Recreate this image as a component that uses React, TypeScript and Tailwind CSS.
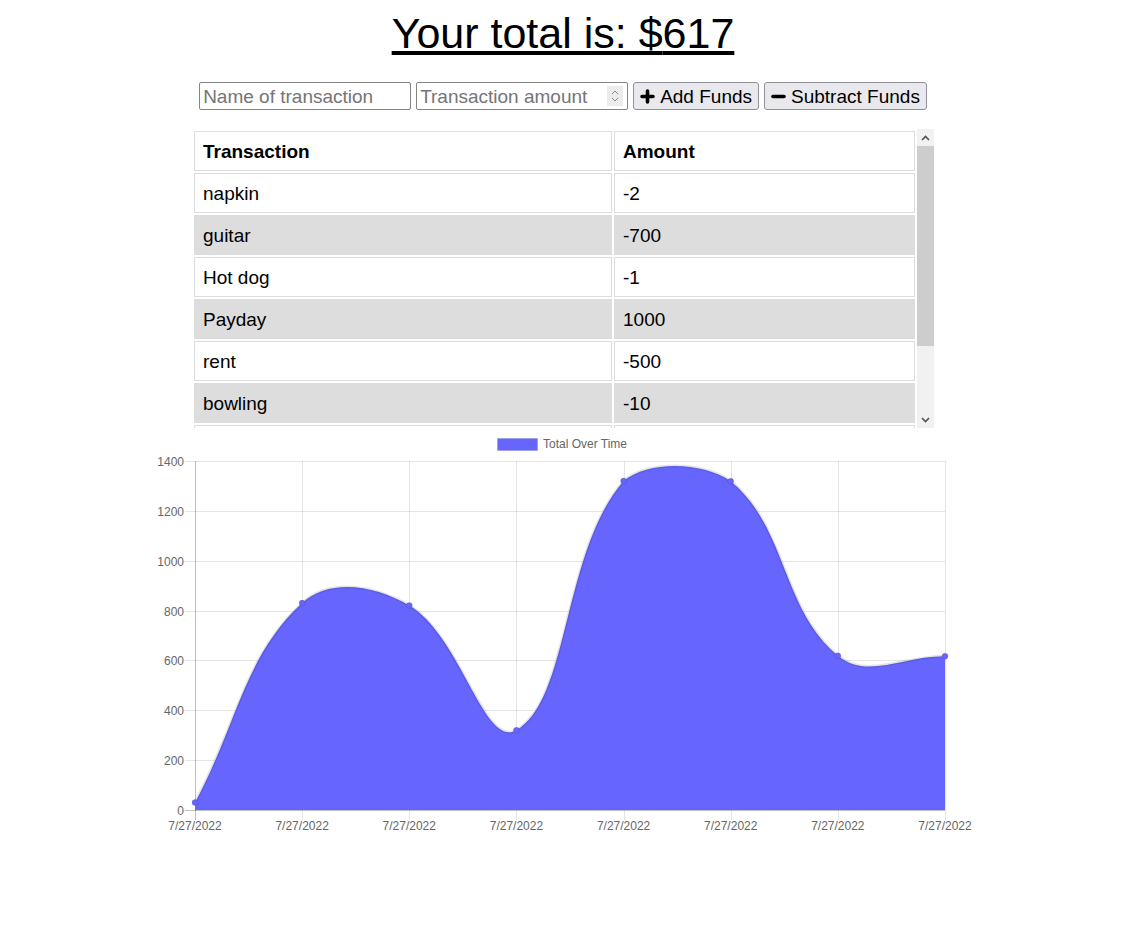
import React from 'react';

const rows = [
  { name: 'napkin', amount: -2 },
  { name: 'guitar', amount: -700 },
  { name: 'Hot dog', amount: -1 },
  { name: 'Payday', amount: 1000 },
  { name: 'rent', amount: -500 },
  { name: 'bowling', amount: -10 },
  { name: 'paycheck', amount: 800 },
  { name: 'gift', amount: 30 },
];

function PlusIcon() {
  return (
    <svg width="15" height="15" viewBox="0 0 15 15">
      <path d="M7.5 2v11M2 7.5h11" stroke="#000" strokeWidth="3.6" strokeLinecap="round" />
    </svg>
  );
}

function MinusIcon() {
  return (
    <svg width="15" height="15" viewBox="0 0 15 15">
      <path d="M2 7.5h11" stroke="#000" strokeWidth="3.6" strokeLinecap="round" />
    </svg>
  );
}

function Chevron({ up }: { up?: boolean }) {
  return (
    <svg width="9" height="6" viewBox="0 0 9 6">
      <path d={up ? 'M1 5l3.5-3.5L8 5' : 'M1 1l3.5 3.5L8 1'} stroke="#505050" strokeWidth="1.6" fill="none" />
    </svg>
  );
}

function Chart() {
  const W = 826;
  const H = 413;
  const left = 45;
  const right = 795;
  const top = 33;
  const bottom = 382;
  const max = 1400;

  // oldest first
  const totals: number[] = [];
  let running = 0;
  [...rows].reverse().forEach((r) => {
    running += r.amount;
    totals.push(running);
  });

  const pts = totals.map((v, i) => ({
    x: left + (i * (right - left)) / (totals.length - 1),
    y: bottom - (v / max) * (bottom - top),
  }));

  // chart.js style spline, tension 0.4
  const t = 0.4;
  const clampX = (x: number) => Math.min(right, Math.max(left, x));
  const clampY = (y: number) => Math.min(bottom, Math.max(top, y));
  const ctrl = pts.map((p, i) => {
    const prev = pts[i - 1] ?? p;
    const next = pts[i + 1] ?? p;
    const d01 = Math.hypot(p.x - prev.x, p.y - prev.y);
    const d12 = Math.hypot(next.x - p.x, next.y - p.y);
    const s01 = d01 / (d01 + d12) || 0;
    const s12 = d12 / (d01 + d12) || 0;
    const fa = t * s01;
    const fb = t * s12;
    return {
      px: clampX(p.x - fa * (next.x - prev.x)),
      py: clampY(p.y - fa * (next.y - prev.y)),
      nx: clampX(p.x + fb * (next.x - prev.x)),
      ny: clampY(p.y + fb * (next.y - prev.y)),
    };
  });

  let line = `M${pts[0].x},${pts[0].y}`;
  for (let i = 1; i < pts.length; i++) {
    line += ` C${ctrl[i - 1].nx},${ctrl[i - 1].ny} ${ctrl[i].px},${ctrl[i].py} ${pts[i].x},${pts[i].y}`;
  }
  const area = `${line} L${right},${bottom} L${left},${bottom} Z`;

  const ticks = [0, 200, 400, 600, 800, 1000, 1200, 1400];
  const grid = 'rgba(0,0,0,0.1)';
  const zero = 'rgba(0,0,0,0.25)';

  return (
    <svg width={W} height={H} viewBox={`0 0 ${W} ${H}`} className="block">
      {/* legend */}
      <rect x="347.5" y="10.5" width="40" height="12" fill="#6666ff" stroke="rgba(0,0,0,0.1)" strokeWidth="1" />
      <text x="393" y="20" fontSize="12" fill="#666" fontFamily="'Liberation Sans', Arial, sans-serif">
        Total Over Time
      </text>

      {/* horizontal grid */}
      {ticks.map((v) => {
        const y = Math.round(bottom - (v / max) * (bottom - top)) + 0.5;
        return (
          <g key={v}>
            <line x1={left - 10} x2={right} y1={y} y2={y} stroke={v === 0 ? zero : grid} strokeWidth="1" />
            <text x={left - 11} y={y + 4} fontSize="12" fill="#666" textAnchor="end" fontFamily="'Liberation Sans', Arial, sans-serif">
              {v}
            </text>
          </g>
        );
      })}

      {/* vertical grid */}
      {pts.map((p, i) => {
        const x = Math.round(p.x) + 0.5;
        return (
          <g key={i}>
            <line x1={x} x2={x} y1={top} y2={bottom + 10} stroke={i === 0 ? zero : grid} strokeWidth="1" />
            <text x={p.x} y={bottom + 20} fontSize="12" fill="#666" textAnchor="middle" fontFamily="'Liberation Sans', Arial, sans-serif">
              7/27/2022
            </text>
          </g>
        );
      })}

      <path d={area} fill="#6666ff" />
      <path d={line} fill="none" stroke="rgba(0,0,0,0.1)" strokeWidth="3" />
      {pts.map((p, i) => (
        <circle key={i} cx={p.x} cy={p.y} r="3" fill="#6666ff" stroke="rgba(0,0,0,0.1)" strokeWidth="1" />
      ))}
    </svg>
  );
}

export default function App() {
  const total = rows.reduce((s, r) => s + r.amount, 0);

  return (
    <div className="min-h-screen bg-white text-black font-['Liberation_Sans',Arial,sans-serif] flex flex-col items-center pt-[8px]">
      <h1 className="text-[43px] leading-[50px] font-normal underline">Your total is: ${total}</h1>

      <form className="mt-[24px] flex items-center gap-[5px] h-[28px]" onSubmit={(e) => e.preventDefault()}>
        <input
          type="text"
          placeholder="Name of transaction"
          className="w-[212px] h-[28px] border border-[#858585] rounded-[2px] px-[3px] pt-[2px] text-[19px] placeholder:text-[#757575] outline-none"
        />
        <div className="relative">
          <input
            type="text"
            inputMode="numeric"
            placeholder="Transaction amount"
            className="w-[212px] h-[28px] border border-[#858585] rounded-[2px] px-[3px] pt-[2px] text-[19px] placeholder:text-[#757575] outline-none"
          />
          <div className="absolute right-[5px] top-[4px] w-[16px] h-[20px] bg-[#ececec] flex flex-col items-center justify-center gap-[2px]">
            <svg width="8" height="5" viewBox="0 0 8 5">
              <path d="M1 4l3-3 3 3" stroke="#8a8a8a" strokeWidth="1" fill="none" />
            </svg>
            <svg width="8" height="5" viewBox="0 0 8 5">
              <path d="M1 1l3 3 3-3" stroke="#8a8a8a" strokeWidth="1" fill="none" />
            </svg>
          </div>
        </div>
        <button className="h-[28px] px-[6px] flex items-center gap-[5px] bg-[#e9e9ed] border border-[#8f8f9d] rounded-[3px] text-[19px] leading-none">
          <PlusIcon />
          Add Funds
        </button>
        <button className="h-[28px] px-[6px] flex items-center gap-[5px] bg-[#e9e9ed] border border-[#8f8f9d] rounded-[3px] text-[19px] leading-none">
          <MinusIcon />
          Subtract Funds
        </button>
      </form>

      <div className="mt-[19px] flex w-[742px] h-[299px]">
        <div className="flex-1 overflow-hidden">
          <table className="w-[725px] border-separate border-spacing-[2px] text-[19px] leading-[22px]">
            <thead>
              <tr>
                <th className="w-[418px] border border-[#dddddd] px-2 pt-[9px] pb-[7px] text-left font-bold">Transaction</th>
                <th className="border border-[#dddddd] px-2 pt-[9px] pb-[7px] text-left font-bold">Amount</th>
              </tr>
            </thead>
            <tbody>
              {rows.map((r, i) => (
                <tr key={i} className={i % 2 === 1 ? 'bg-[#dddddd]' : 'bg-white'}>
                  <td className="border border-[#dddddd] px-2 pt-[9px] pb-[7px]">{r.name}</td>
                  <td className="border border-[#dddddd] px-2 pt-[9px] pb-[7px]">{r.amount}</td>
                </tr>
              ))}
            </tbody>
          </table>
        </div>
        <div className="w-[17px] bg-[#f1f1f1] flex flex-col">
          <div className="h-[17px] flex items-center justify-center">
            <Chevron up />
          </div>
          <div className="h-[200px] bg-[#cdcdcd]" />
          <div className="flex-1" />
          <div className="h-[17px] flex items-center justify-center">
            <Chevron />
          </div>
        </div>
      </div>

      <Chart />
    </div>
  );
}
